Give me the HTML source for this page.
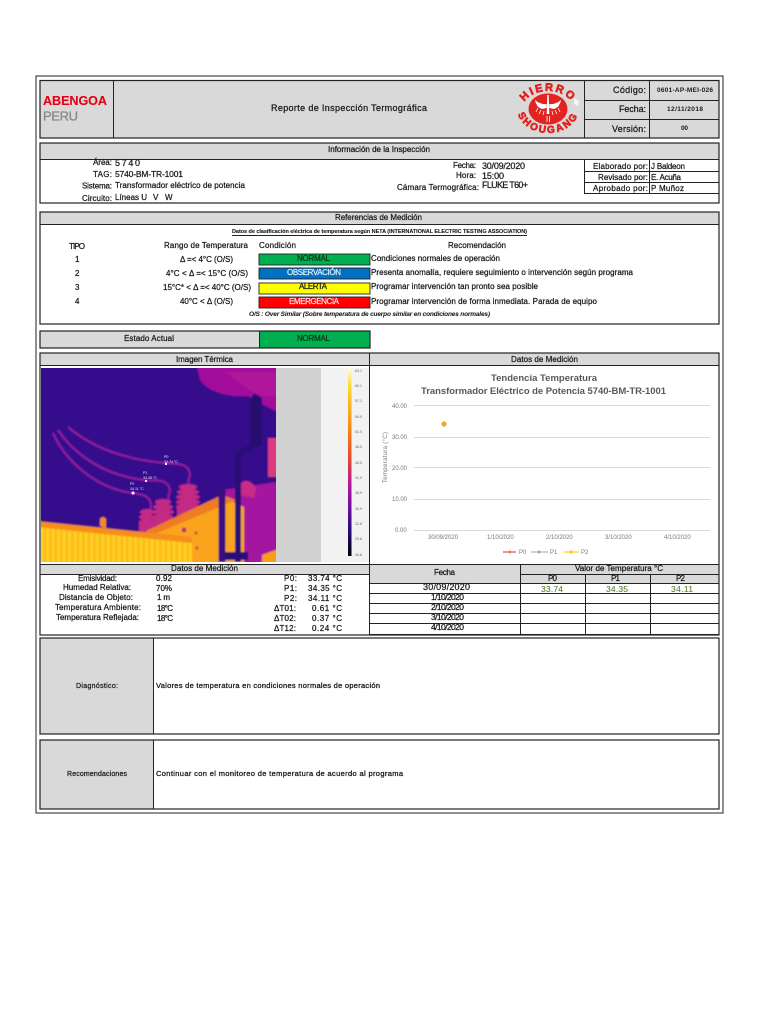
<!DOCTYPE html>
<html lang="es"><head><meta charset="utf-8"><title>Reporte de Inspección Termográfica</title>
<style>
html,body{margin:0;padding:0;background:#fff;width:768px;height:1024px;overflow:hidden}
svg{display:block}
text{font-family:"Liberation Sans",sans-serif;font-size:8px;fill:#1a1a1a;stroke:#1a1a1a;stroke-width:.25px}
.c text,text.c{fill:#767676;stroke:none;font-size:6px}
.bx{fill:none;stroke:#222;stroke-width:1.2}
.ln{stroke:#222;stroke-width:1;fill:none}
.g{fill:#d9d9d9}
.b{font-weight:bold}
</style></head><body>
<svg width="768" height="1024" viewBox="0 0 768 1024" xmlns="http://www.w3.org/2000/svg">
<defs>
<filter id="t" filterUnits="userSpaceOnUse" x="0" y="0" width="768" height="1024"><feGaussianBlur stdDeviation=".33"/></filter>
<filter id="h" filterUnits="userSpaceOnUse" x="30" y="360" width="260" height="210"><feGaussianBlur stdDeviation=".8"/></filter>
<clipPath id="cp"><rect x="41" y="368" width="235" height="194"/></clipPath>
<linearGradient id="cb" x1="0" y1="0" x2="0" y2="1">
<stop offset="0" stop-color="#fffbe0"/><stop offset=".1" stop-color="#fdd830"/><stop offset=".3" stop-color="#f89018"/><stop offset=".48" stop-color="#e8482c"/><stop offset=".62" stop-color="#b01a98"/><stop offset=".76" stop-color="#6010a0"/><stop offset=".88" stop-color="#200a70"/><stop offset="1" stop-color="#000"/>
</linearGradient>
<pattern id="st" width="5.5" height="10" patternUnits="userSpaceOnUse"><rect width="5.5" height="10" fill="#ffcf24"/><rect width="1.8" height="10" fill="#fbb216"/></pattern>
<path id="arcT" d="M523,108 A25,17 0 0 1 573,108"/>
<path id="arcB" d="M517,108 A31,25 0 0 0 579,108"/>
</defs>

<rect width="768" height="1024" fill="#fff"/>
<!-- grey fills -->
<rect class="g" x="40" y="80" width="679" height="58"/>
<rect class="g" x="40" y="143" width="679" height="16"/>
<rect class="g" x="40" y="212" width="679" height="12"/>
<rect class="g" x="40" y="331" width="219" height="17"/>
<rect class="g" x="40" y="353" width="679" height="12"/>
<rect class="g" x="40" y="565" width="329" height="9"/>
<rect class="g" x="370" y="565" width="349" height="9"/>
<rect class="g" x="370" y="574" width="349" height="9"/>
<rect class="g" x="40" y="638" width="113" height="96"/>
<rect class="g" x="40" y="740" width="113" height="69"/>
<!-- condition cells -->
<rect x="259" y="254" width="111" height="11" fill="#00b050"/>
<rect x="259" y="268" width="111" height="11" fill="#0070c0"/>
<rect x="259" y="283" width="111" height="11" fill="#ffff00"/>
<rect x="259" y="297" width="111" height="11" fill="#ff0000"/>
<rect x="259" y="331" width="111" height="17" fill="#00b050"/>

<!-- thermal image -->
<rect x="276" y="368" width="45" height="194" fill="#d2d2d2"/>
<rect x="321" y="368" width="48" height="194" fill="#f2f2f2"/>
<rect x="348" y="368" width="3.5" height="188" fill="url(#cb)"/>
<g clip-path="url(#cp)"><g filter="url(#h)">
<rect x="36" y="362" width="245" height="205" fill="#35088c"/>
<path d="M196,362H281V414L262,404L248,396Q214,398 200,380Z" fill="#a2109c"/>
<path d="M225,372H281V398L255,394Z" fill="#b0149a"/>
<path d="M68,427C95,450 130,460 165,463C176,464 188,462 190,474C190,478 187,480 189,486" fill="none" stroke="#8f1a9c" stroke-width="2.2"/>
<path d="M58,430C75,455 105,476 145,480C155,481 168,478 170,490C170,494 167,496 169,500" fill="none" stroke="#8f1a9c" stroke-width="2.2"/>
<path d="M53,433C65,460 95,488 132,493C142,494 150,496 151,504C151,508 150,510 152,514" fill="none" stroke="#8f1a9c" stroke-width="2.2"/>
<g fill="#c42a84">
<ellipse cx="188" cy="487" rx="9" ry="3"/><ellipse cx="188" cy="492" rx="11" ry="3"/><ellipse cx="188" cy="497" rx="12" ry="3"/><ellipse cx="188" cy="502" rx="12" ry="3"/><ellipse cx="188" cy="507" rx="12" ry="3.500"/><rect x="177" y="505" width="22" height="12"/>
<ellipse cx="163" cy="502" rx="8" ry="3"/><ellipse cx="163" cy="507" rx="10" ry="3"/><ellipse cx="163" cy="512" rx="11" ry="3"/><ellipse cx="163" cy="517" rx="10" ry="3"/><rect x="153" y="517" width="20" height="9"/>
<ellipse cx="147" cy="512" rx="7" ry="3"/><ellipse cx="147" cy="517" rx="8" ry="3"/><ellipse cx="147" cy="522" rx="8" ry="3"/><rect x="139" y="522" width="16" height="10"/>
</g>
<path d="M222,490L276,482V567H205Z" fill="#a414a0"/>
<path d="M268,438H281V477H268Z" fill="#dc3a80"/>
<path d="M240,484Q248,476 256,488L254,498L240,495Z" fill="#c82a88"/>
<path d="M146,532L222,496L244,507L244,567H190Z" fill="#f9a41a"/>
<path d="M262,555L281,548V567H262Z" fill="#fa9c18"/>
<path d="M146,531L222,495L236,500L150,536Z" fill="#ee7c24"/>
<path d="M36,522L192,538V567H36Z" fill="url(#st)"/>
<path d="M36,521L192,537V543L36,527Z" fill="#f68e1a"/>
<path d="M100,526V519Q103,515 106,519V529Z" fill="#f08a2a"/>
<circle cx="184" cy="530" r="2.500" fill="#c0306a"/><circle cx="196" cy="533" r="1.600" fill="#d84a40"/><circle cx="197" cy="548" r="1.600" fill="#d84a40"/>
<path d="M222,487V562" stroke="#3a0c80" stroke-width="7"/>
<path d="M238,562V460Q238,450 250,448L255,445V420" fill="none" stroke="#2c0a74" stroke-width="6"/>
<path d="M250,448L250,400L254,393L262,398L262,445Z" fill="#280a70"/>
<path d="M225,552H248V560H225Z" fill="#2c0a78"/>
</g>
<g fill="#f4e8ff" stroke="none">
<rect x="165" y="463" width="2" height="2"/><rect x="145" y="480" width="2" height="2"/><path d="M132,491.500h2v1h1v1h-1v1h-2v-1h-1v-1h1z"/>
</g>
<g><text x="164" y="458" style="font-size:3.600px;fill:#f0e0ff;stroke:none">P0</text><text x="164" y="463" style="font-size:3.600px;fill:#f0e0ff;stroke:none">33.74 °C</text><text x="143" y="474" style="font-size:3.600px;fill:#f0e0ff;stroke:none">P1</text><text x="143" y="479" style="font-size:3.600px;fill:#f0e0ff;stroke:none">34.35 °C</text><text x="130" y="485" style="font-size:3.600px;fill:#f0e0ff;stroke:none">P2</text><text x="130" y="490" style="font-size:3.600px;fill:#f0e0ff;stroke:none">34.11 °C</text></g>
</g>
<g>
<text x="355" y="372" style="font-size:3.600px;fill:#666;stroke:none">63.1</text><text x="355" y="387" style="font-size:3.600px;fill:#666;stroke:none">60.1</text><text x="355" y="402" style="font-size:3.600px;fill:#666;stroke:none">57.1</text><text x="355" y="418" style="font-size:3.600px;fill:#666;stroke:none">54.0</text><text x="355" y="433" style="font-size:3.600px;fill:#666;stroke:none">51.0</text><text x="355" y="448" style="font-size:3.600px;fill:#666;stroke:none">48.0</text><text x="355" y="464" style="font-size:3.600px;fill:#666;stroke:none">45.0</text><text x="355" y="479" style="font-size:3.600px;fill:#666;stroke:none">41.9</text><text x="355" y="494" style="font-size:3.600px;fill:#666;stroke:none">38.9</text><text x="355" y="510" style="font-size:3.600px;fill:#666;stroke:none">35.9</text><text x="355" y="525" style="font-size:3.600px;fill:#666;stroke:none">32.8</text><text x="355" y="540" style="font-size:3.600px;fill:#666;stroke:none">29.8</text><text x="355" y="556" style="font-size:3.600px;fill:#666;stroke:none">26.8</text>
</g>

<!-- chart -->
<g stroke="#d9d9d9" stroke-width="1">
<path d="M414 405.500H710M414 437.500H710M414 467.500H710M414 499.500H710M414 530.500H710"/>
</g>
<circle cx="444" cy="424" r="2.600" fill="#f0a428"/>
<g filter="url(#t)">
<text x="491" y="381" class="b" textLength="106" style="font-size:9.500px;fill:#595959;stroke:none">Tendencia Temperatura</text>
<text x="421" y="394" class="b" textLength="245" style="font-size:9.500px;fill:#595959;stroke:none">Transformador Eléctrico de Potencia 5740-BM-TR-1001</text>
<g class="c">
<text x="392" y="408">40.00</text><text x="392" y="439">30.00</text><text x="392" y="470">20.00</text><text x="392" y="501">10.00</text><text x="395" y="532">0.00</text>
<text x="428" y="539">30/09/2020</text><text x="487" y="539">1/10/2020</text><text x="546" y="539">2/10/2020</text><text x="605" y="539">3/10/2020</text><text x="664" y="539">4/10/2020</text>
<text x="0" y="0" transform="translate(387,483) rotate(-90)" textLength="51">Temperatura (°C)</text>
<text x="519" y="554">P0</text><text x="550" y="554">P1</text><text x="581" y="554">P2</text>
</g>
</g>
<path d="M503 552H516" stroke="#e8251f" stroke-width="1"/><circle cx="510" cy="552" r="1.500" fill="#ed7d31"/>
<path d="M531 552H548" stroke="#a5a5a5" stroke-width="1"/><circle cx="539" cy="552" r="1.500" fill="#a5a5a5"/>
<path d="M564 552H579" stroke="#ffc000" stroke-width="1"/><circle cx="571" cy="552" r="1.500" fill="#ffc000"/>

<!-- logo -->
<polygon points="574,98 579,101 578,106 574,104" fill="#f4f4f4"/>
<ellipse cx="548" cy="109" rx="19.500" ry="15.500" fill="#e2231f"/>
<path d="M547.300,95L548.700,95L549.300,114H546.700Z" fill="#fff"/>
<path d="M546.700,104Q541,105 535,100Q536,107 542,109L546.700,108Z" fill="#fff"/>
<path d="M549.300,104Q555,105 561,100Q560,107 554,109L549.300,108Z" fill="#fff"/>
<path d="M538,108L536,112M541,110L539,114M544,111L543,115M558,108L560,112M555,110L557,114M552,111L553,115M547,116V122M549.500,116V122" stroke="#fff" stroke-width=".8" fill="none"/>
<g filter="url(#t)">
<text class="b" style="font-size:11px;fill:#e2231f;stroke:#e2231f;stroke-width:.7;letter-spacing:1.800px" text-anchor="middle"><textPath href="#arcT" startOffset="50%">HIERRO</textPath></text>
<text class="b" style="font-size:10px;fill:#e2231f;stroke:#e2231f;stroke-width:.7;letter-spacing:2px" text-anchor="middle"><textPath href="#arcB" startOffset="50%">SHOUGANG</textPath></text>
</g>

<!-- borders -->
<rect x="36" y="76" width="687" height="737" fill="none" stroke="#222" stroke-width="1"/>
<rect class="bx" x="40" y="80.500" width="679" height="57.500"/>
<path class="ln" d="M113.500 80V138M584.500 80V138M649.500 80V138M584 100.500H719M584 119.500H719"/>
<rect class="bx" x="40" y="143" width="679" height="60"/>
<path class="ln" d="M40 159.500H719M584.500 159V193.500M649.500 159V193M584 171.500H719M584 182.500H719M584 193.500H719"/>
<rect class="bx" x="40" y="212" width="679" height="112"/>
<path class="ln" d="M40 224.500H719M232 235.500H527"/>
<g stroke="#222" fill="none" stroke-width=".9">
<rect x="259" y="254" width="111" height="11"/><rect x="259" y="268" width="111" height="11"/><rect x="259" y="283" width="111" height="11"/><rect x="259" y="297" width="111" height="11"/>
</g>
<rect class="bx" x="40" y="331" width="330" height="17"/><path class="ln" d="M259.500 331V348"/>
<rect class="bx" x="40" y="353" width="679" height="282"/>
<path class="ln" d="M40 365.500H719M369.500 353V635M40 564.500H719M40 574.500H369M370 583.500H719M520.500 565V634M585.500 574V634M650.500 574V634M520 574.500H719M370 593.500H719M370 603.500H719M370 613.500H719M370 623.500H719M370 634.500H719"/>
<rect class="bx" x="40" y="638" width="679" height="96"/><path class="ln" d="M153.500 638V734"/>
<rect class="bx" x="40" y="740" width="679" height="69"/><path class="ln" d="M153.500 740V809"/>

<!-- text -->
<g filter="url(#t)">
<text x="43" y="105" class="b" textLength="64" style="font-size:12.600px;fill:#e30613;stroke:#e30613;stroke-width:.1">ABENGOA</text>
<text x="43" y="120.500" textLength="35" style="font-size:13px;fill:#8a8a8a;stroke:#8a8a8a;stroke-width:.35">PERU</text>
<text x="271" y="111" textLength="156" style="font-size:9px">Reporte de Inspección Termográfica</text>
<text x="613" y="93" textLength="33" style="font-size:9px">Código:</text>
<text x="619" y="112" textLength="27" style="font-size:9px">Fecha:</text>
<text x="612" y="132" textLength="34" style="font-size:9px">Versión:</text>
<text x="657" y="92" class="b" textLength="56" style="font-size:6.500px;stroke-width:0">0601-AP-MEI-026</text>
<text x="667" y="111" class="b" textLength="36" style="font-size:6.500px;stroke-width:0">12/11/2018</text>
<text x="681" y="130" class="b" textLength="7" style="font-size:6.500px;stroke-width:0">00</text>

<text x="328" y="152" textLength="102">Información de la Inspección</text>
<text x="93" y="165" textLength="19">Área:</text><text x="115" y="166" textLength="25" style="font-size:9px">5740</text>
<text x="93" y="177" textLength="19">TAG:</text><text x="115" y="177" textLength="68" style="font-size:8.500px">5740-BM-TR-1001</text>
<text x="82" y="188.500" textLength="30">Sistema:</text><text x="115" y="188" textLength="130">Transformador eléctrico de potencia</text>
<text x="82" y="201" textLength="30">Circuito:</text>
<text x="115" y="200">Líneas U</text><text x="153" y="200">V</text><text x="165" y="200">W</text>
<text x="453" y="168" textLength="23">Fecha:</text><text x="482" y="169" textLength="43" style="font-size:9px">30/09/2020</text>
<text x="456" y="178" textLength="20">Hora:</text><text x="482" y="179" textLength="22" style="font-size:9px">15:00</text>
<text x="397" y="190" textLength="82">Cámara Termográfica:</text><text x="482" y="188" textLength="46" style="font-size:9px">FLUKE T60+</text>
<text x="593" y="169" textLength="55">Elaborado por:</text><text x="651" y="169" textLength="34">J Baldeon</text>
<text x="598" y="180" textLength="50">Revisado por:</text><text x="651" y="180" textLength="30">E. Acuña</text>
<text x="593" y="191" textLength="55">Aprobado por:</text><text x="651" y="191" textLength="33">P Muñoz</text>

<text x="335" y="220" textLength="87">Referencias de Medición</text>
<text x="232" y="233" class="b" textLength="295" style="font-size:5.500px;stroke-width:.1">Datos de clasificación eléctrica de temperatura según NETA (INTERNATIONAL ELECTRIC TESTING ASSOCIATION)</text>
<text x="69" y="249" textLength="16">TIPO</text><text x="164" y="248" textLength="84">Rango de Temperatura</text><text x="259" y="248" textLength="37">Condición</text><text x="448" y="248" textLength="58">Recomendación</text>
<text x="75" y="262">1</text><text x="75" y="276">2</text><text x="75" y="290">3</text><text x="75" y="304">4</text>
<text x="180" y="262" textLength="53">Δ =&lt; 4°C (O/S)</text>
<text x="166" y="276" textLength="82">4°C &lt; Δ =&lt; 15°C (O/S)</text>
<text x="163" y="290" textLength="88">15°C* &lt; Δ =&lt; 40°C (O/S)</text>
<text x="180" y="304" textLength="53">40°C &lt; Δ (O/S)</text>
<text x="297" y="261" textLength="33" style="fill:#0a3d1c;stroke:#0a3d1c;stroke-width:.35">NORMAL</text>
<text x="287" y="275" textLength="54" style="fill:#d8ecff;stroke:#d8ecff">OBSERVACIÓN</text>
<text x="299" y="289" textLength="28">ALERTA</text>
<text x="289" y="304" textLength="50" style="fill:#ffe0e0;stroke:#ffe0e0">EMERGENCIA</text>
<text x="371" y="261" textLength="129">Condiciones normales de operación</text>
<text x="371" y="275" textLength="262">Presenta anomalía, requiere seguimiento o intervención según programa</text>
<text x="371" y="289" textLength="167">Programar intervención tan pronto sea posible</text>
<text x="371" y="304" textLength="226">Programar intervención de forma inmediata. Parada de equipo</text>
<text x="249" y="316" class="b" textLength="241" style="font-size:6.500px;font-style:italic;stroke-width:.05">O/S : Over Similar (Sobre temperatura de cuerpo similar en condiciones normales)</text>
<text x="124" y="341" textLength="50">Estado Actual</text>
<text x="297" y="341" textLength="33" style="fill:#0a3d1c;stroke:#0a3d1c;stroke-width:.35">NORMAL</text>
<text x="176" y="362" textLength="57">Imagen Térmica</text>
<text x="511" y="362" textLength="67">Datos de Medición</text>

<text x="171" y="571" textLength="67">Datos de Medición</text>
<text x="78" y="581" textLength="39">Emisividad:</text><text x="156" y="581" textLength="16">0.92</text>
<text x="63" y="590" textLength="68">Humedad Relativa:</text><text x="156" y="591" textLength="16">70%</text>
<text x="59" y="600" textLength="74">Distancia de Objeto:</text><text x="157" y="600" textLength="13">1 m</text>
<text x="55" y="610" textLength="86">Temperatura Ambiente:</text><text x="157" y="611" textLength="16">18°C</text>
<text x="56" y="620" textLength="83">Temperatura Reflejada:</text><text x="157" y="621" textLength="16">18°C</text>
<text x="284" y="581" textLength="13">P0:</text><text x="308" y="581" textLength="34">33.74 °C</text>
<text x="284" y="591" textLength="13">P1:</text><text x="308" y="591" textLength="34">34.35 °C</text>
<text x="284" y="601" textLength="13">P2:</text><text x="308" y="601" textLength="34">34.11 °C</text>
<text x="274" y="611" textLength="22">ΔT01:</text><text x="312" y="611" textLength="30">0.61 °C</text>
<text x="274" y="621" textLength="22">ΔT02:</text><text x="312" y="621" textLength="30">0.37 °C</text>
<text x="274" y="631" textLength="22">ΔT12:</text><text x="312" y="631" textLength="30">0.24 °C</text>

<text x="434" y="575" textLength="21">Fecha</text>
<text x="575" y="571" textLength="88">Valor de Temperatura °C</text>
<text x="548" y="581" textLength="9">P0</text><text x="611" y="581" textLength="9">P1</text><text x="676" y="581" textLength="9">P2</text>
<text x="423" y="590" textLength="47" style="font-size:9px">30/09/2020</text>
<text x="431" y="600" textLength="33" style="font-size:8.500px">1/10/2020</text>
<text x="431" y="610" textLength="33" style="font-size:8.500px">2/10/2020</text>
<text x="431" y="620" textLength="33" style="font-size:8.500px">3/10/2020</text>
<text x="431" y="630" textLength="33" style="font-size:8.500px">4/10/2020</text>
<text x="541" y="592" textLength="22" style="fill:#548235;stroke:#548235;font-size:8.500px;stroke-width:.1">33.74</text>
<text x="606" y="592" textLength="22" style="fill:#548235;stroke:#548235;font-size:8.500px;stroke-width:.1">34.35</text>
<text x="671" y="592" textLength="22" style="fill:#548235;stroke:#548235;font-size:8.500px;stroke-width:.1">34.11</text>

<text x="76" y="688" textLength="42" style="font-size:7px">Diagnóstico:</text>
<text x="156" y="688" textLength="224" style="font-size:7.500px;stroke-width:.3">Valores de temperatura en condiciones normales de operación</text>
<text x="67" y="776" textLength="60" style="font-size:7px">Recomendaciones</text>
<text x="156" y="776" textLength="247" style="font-size:7.500px;stroke-width:.3">Continuar con el monitoreo de temperatura de acuerdo al programa</text>
</g>
</svg>
</body></html>
